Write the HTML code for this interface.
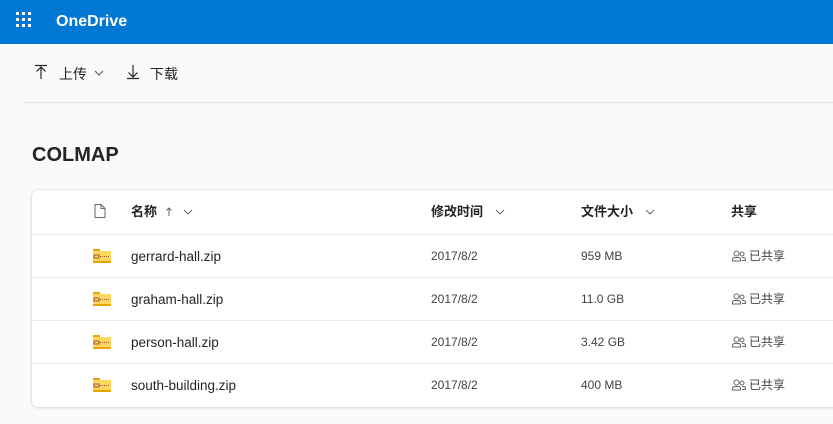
<!DOCTYPE html>
<html><head><meta charset="utf-8"><style>
*{margin:0;padding:0;box-sizing:border-box}
body{width:833px;height:424px;overflow:hidden;background:#fafafa;font-family:"Liberation Sans","Noto Sans CJK SC",sans-serif;color:#242424;position:relative}
.top{position:absolute;left:0;top:0;width:833px;height:44px;background:#0078d4}
.waffle{position:absolute;left:16px;top:12px;width:16px;height:16px}
.waffle i{position:absolute;width:3px;height:3px;background:#fff}
.brand{position:absolute;left:56px;top:13px;color:#fff;font-size:16px;font-weight:bold}
.tb{position:absolute;top:64px;font-size:14px;color:#242424}
.div{position:absolute;left:24px;top:102px;width:809px;height:1px;background:#e6e6e6}
h1{position:absolute;left:32px;top:144px;font-size:20px;font-weight:bold;color:#242424}
.card{position:absolute;left:32px;top:190px;width:820px;height:217px;background:#fff;border-radius:6px;box-shadow:0 0 2px rgba(0,0,0,.15),0 1px 3px rgba(0,0,0,.1)}
.row{position:absolute;left:0;width:820px;height:43px;border-top:1px solid #ebebeb}
.c{position:absolute;top:0;line-height:43px;white-space:nowrap}
.hd{font-weight:bold;font-size:13px}
.nm{left:99px;font-size:13.5px;color:#242424}
.dt{left:399px;font-size:12px;color:#424242}
.sz{left:549px;font-size:12px;color:#424242}
.sh{left:717px;font-size:12px;color:#424242}
.ch{position:absolute;top:18px}
.pp{position:absolute;left:700px;top:15px}
</style></head><body>
<div class="top">
<div class="waffle">
<i style="left:0;top:0"></i><i style="left:6px;top:0"></i><i style="left:12px;top:0"></i>
<i style="left:0;top:6px"></i><i style="left:6px;top:6px"></i><i style="left:12px;top:6px"></i>
<i style="left:0;top:12px"></i><i style="left:6px;top:12px"></i><i style="left:12px;top:12px"></i>
</div>
<div class="brand">OneDrive</div>
</div>
<svg style="position:absolute;left:34px;top:64px" width="14" height="16"><path d="M1 1.5H13M7 3V15M2.5 7.5L7 3 11.5 7.5" stroke="#242424" fill="none" stroke-width="1.2"/></svg>
<div class="tb" style="left:59px">上传</div>
<svg style="position:absolute;left:94px;top:70px" width="10" height="6"><path d="M1 1L5 5 9 1" stroke="#555" fill="none"/></svg>
<svg style="position:absolute;left:126px;top:64px" width="14" height="16"><path d="M1 14.5H13M7 1V13M2.5 8.5L7 13 11.5 8.5" stroke="#242424" fill="none" stroke-width="1.2"/></svg>
<div class="tb" style="left:150px">下载</div>
<div class="div"></div>
<h1>COLMAP</h1>
<div class="card">
<div class="row" style="top:0;border-top:none;height:44px">
<svg style="position:absolute;left:62px;top:13px" width="12" height="16"><path d="M1 1.5H7L11 5.5V14.5H1Z M7 1.5V5.5H11" stroke="#666" fill="none"/></svg>
<div class="c hd" style="left:99px;line-height:44px">名称</div>
<svg class="ch" style="left:133px;top:17px" width="8" height="10"><path d="M4 1V9M1.5 3.5L4 1 6.5 3.5" stroke="#666" fill="none"/></svg>
<svg class="ch" style="left:151px;top:19px" width="10" height="6"><path d="M1 1L5 5 9 1" stroke="#666" fill="none"/></svg>
<div class="c hd" style="left:399px;line-height:44px">修改时间</div>
<svg class="ch" style="left:463px;top:19px" width="10" height="6"><path d="M1 1L5 5 9 1" stroke="#666" fill="none"/></svg>
<div class="c hd" style="left:549px;line-height:44px">文件大小</div>
<svg class="ch" style="left:613px;top:19px" width="10" height="6"><path d="M1 1L5 5 9 1" stroke="#666" fill="none"/></svg>
<div class="c hd" style="left:699px;line-height:44px">共享</div>
</div>
<div class="row" style="top:44px"><svg style="position:absolute;left:61px;top:14px" width="18" height="14"><rect x="0" y="0" width="7" height="4" fill="#e8a500"/><rect x="0" y="2" width="18" height="11" fill="#ffd75e"/><rect x="0" y="12" width="18" height="2" fill="#e8a500"/><rect x="1" y="6" width="5" height="3" fill="none" stroke="#a0522d"/><path d="M7 7.5H17" stroke="#a0522d" stroke-dasharray="1 1"/></svg><div class="c nm">gerrard-hall.zip</div><div class="c dt">2017/8/2</div><div class="c sz">959 MB</div><svg class="pp" width="14" height="12"><circle cx="4.5" cy="3.5" r="2.5" stroke="#666" fill="none"/><path d="M0.5 11V9.5Q0.5 7.5 3 7.5H6Q8.5 7.5 8.5 9.5V11Z" stroke="#666" fill="none"/><circle cx="10" cy="4" r="2" stroke="#666" fill="none"/><path d="M10 7.5H11Q13.5 7.5 13.5 9.5V10.5H10" stroke="#666" fill="none"/></svg><div class="c sh">已共享</div></div>
<div class="row" style="top:87px"><svg style="position:absolute;left:61px;top:14px" width="18" height="14"><rect x="0" y="0" width="7" height="4" fill="#e8a500"/><rect x="0" y="2" width="18" height="11" fill="#ffd75e"/><rect x="0" y="12" width="18" height="2" fill="#e8a500"/><rect x="1" y="6" width="5" height="3" fill="none" stroke="#a0522d"/><path d="M7 7.5H17" stroke="#a0522d" stroke-dasharray="1 1"/></svg><div class="c nm">graham-hall.zip</div><div class="c dt">2017/8/2</div><div class="c sz">11.0 GB</div><svg class="pp" width="14" height="12"><circle cx="4.5" cy="3.5" r="2.5" stroke="#666" fill="none"/><path d="M0.5 11V9.5Q0.5 7.5 3 7.5H6Q8.5 7.5 8.5 9.5V11Z" stroke="#666" fill="none"/><circle cx="10" cy="4" r="2" stroke="#666" fill="none"/><path d="M10 7.5H11Q13.5 7.5 13.5 9.5V10.5H10" stroke="#666" fill="none"/></svg><div class="c sh">已共享</div></div>
<div class="row" style="top:130px"><svg style="position:absolute;left:61px;top:14px" width="18" height="14"><rect x="0" y="0" width="7" height="4" fill="#e8a500"/><rect x="0" y="2" width="18" height="11" fill="#ffd75e"/><rect x="0" y="12" width="18" height="2" fill="#e8a500"/><rect x="1" y="6" width="5" height="3" fill="none" stroke="#a0522d"/><path d="M7 7.5H17" stroke="#a0522d" stroke-dasharray="1 1"/></svg><div class="c nm">person-hall.zip</div><div class="c dt">2017/8/2</div><div class="c sz">3.42 GB</div><svg class="pp" width="14" height="12"><circle cx="4.5" cy="3.5" r="2.5" stroke="#666" fill="none"/><path d="M0.5 11V9.5Q0.5 7.5 3 7.5H6Q8.5 7.5 8.5 9.5V11Z" stroke="#666" fill="none"/><circle cx="10" cy="4" r="2" stroke="#666" fill="none"/><path d="M10 7.5H11Q13.5 7.5 13.5 9.5V10.5H10" stroke="#666" fill="none"/></svg><div class="c sh">已共享</div></div>
<div class="row" style="top:173px"><svg style="position:absolute;left:61px;top:14px" width="18" height="14"><rect x="0" y="0" width="7" height="4" fill="#e8a500"/><rect x="0" y="2" width="18" height="11" fill="#ffd75e"/><rect x="0" y="12" width="18" height="2" fill="#e8a500"/><rect x="1" y="6" width="5" height="3" fill="none" stroke="#a0522d"/><path d="M7 7.5H17" stroke="#a0522d" stroke-dasharray="1 1"/></svg><div class="c nm">south-building.zip</div><div class="c dt">2017/8/2</div><div class="c sz">400 MB</div><svg class="pp" width="14" height="12"><circle cx="4.5" cy="3.5" r="2.5" stroke="#666" fill="none"/><path d="M0.5 11V9.5Q0.5 7.5 3 7.5H6Q8.5 7.5 8.5 9.5V11Z" stroke="#666" fill="none"/><circle cx="10" cy="4" r="2" stroke="#666" fill="none"/><path d="M10 7.5H11Q13.5 7.5 13.5 9.5V10.5H10" stroke="#666" fill="none"/></svg><div class="c sh">已共享</div></div>
</div>
</body></html>
